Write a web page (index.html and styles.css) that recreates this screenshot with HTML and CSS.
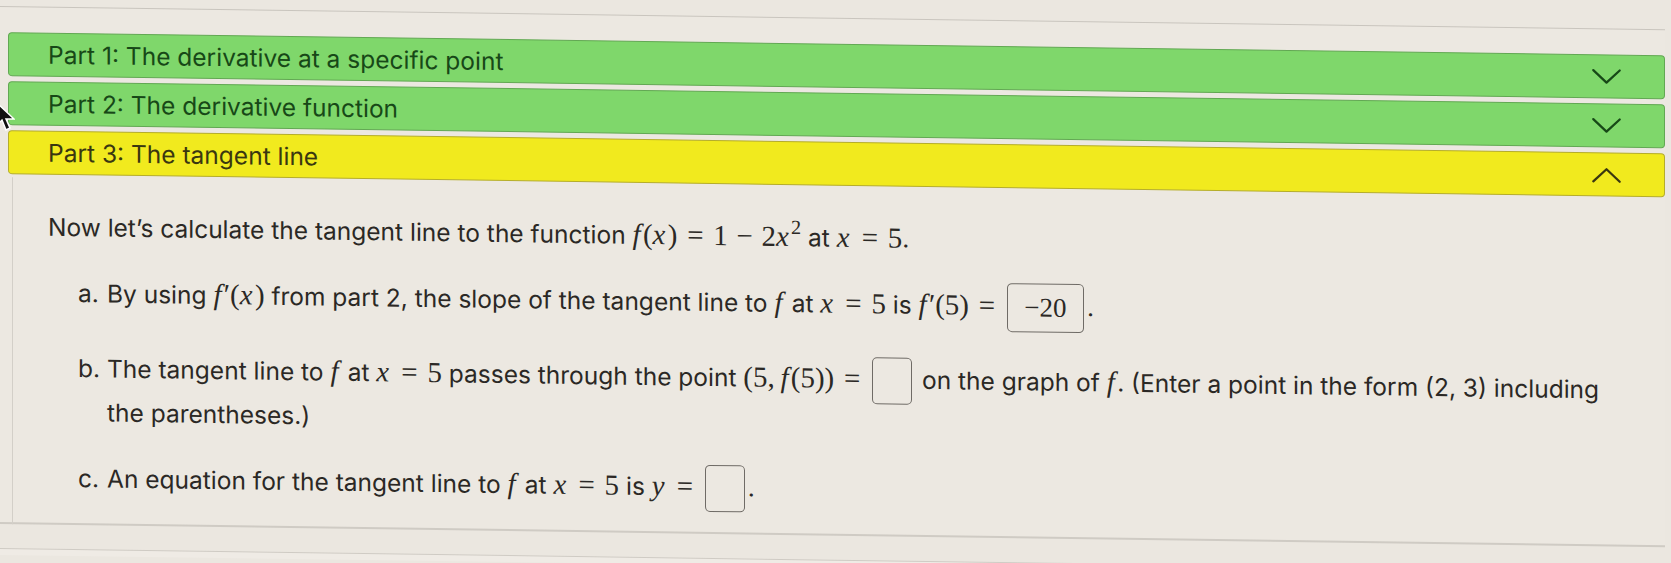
FILE: index.html
```html
<!DOCTYPE html>
<html lang="en">
<head>
<meta charset="utf-8">
<title>Part 3: The tangent line</title>
<link rel="stylesheet" href="styles.css">
</head>
<body>
<div class="page">
  <div class="sheet">
    <div class="parts">
      <div class="part done">
        <span class="part-title">Part 1: The derivative at a specific point</span>
        <svg class="chev" viewBox="0 0 32 18"><polyline points="2,2 16,15 30,2"/></svg>
      </div>
      <div class="part done">
        <span class="part-title">Part 2: The derivative function</span>
        <svg class="chev" viewBox="0 0 32 18"><polyline points="2,2 16,15 30,2"/></svg>
      </div>
      <div class="part current">
        <span class="part-title">Part 3: The tangent line</span>
        <svg class="chev" viewBox="0 0 32 18"><polyline points="2,16 16,3 30,16"/></svg>
      </div>
    </div>

    <div class="content">
      <p class="intro">Now let’s calculate the tangent line to the function <span class="math"><i>f</i>(<i>x</i>)<span class="rel">=</span>1<span class="bin">−</span>2<i>x</i><sup>2</sup></span> at <span class="math"><i>x</i><span class="rel">=</span>5</span>.</p>

      <div class="step step-a">
        <span class="mark">a.</span>
        <div class="body">By using <span class="math"><i>f</i>′(<i>x</i>)</span> from part 2, the slope of the tangent line to <span class="math"><i>f</i></span> at <span class="math"><i>x</i><span class="rel">=</span>5</span> is <span class="math"><i>f</i>′(5)<span class="rel">=</span></span><span class="answer filled"><span class="math">−20</span></span>.</div>
      </div>

      <div class="step step-b">
        <span class="mark">b.</span>
        <div class="body">The tangent line to <span class="math"><i>f</i></span> at <span class="math"><i>x</i><span class="rel">=</span>5</span> passes through the point <span class="math">(5,<span class="thin"></span><i>f</i>(5))<span class="rel">=</span></span><span class="answer"></span> on the graph of <span class="math"><i>f</i></span>. (Enter a point in the form (2, 3) including the parentheses.)</div>
      </div>

      <div class="step step-c">
        <span class="mark">c.</span>
        <div class="body">An equation for the tangent line to <span class="math"><i>f</i></span> at <span class="math"><i>x</i><span class="rel">=</span>5</span> is <span class="math"><i>y</i><span class="rel">=</span></span><span class="answer"></span>.</div>
      </div>
    </div>
  </div>
  <div class="footer"></div>
</div>

<svg class="cursor" viewBox="0 0 20 32"><polygon points="1,1 1,25 7,19 11,29 15,27 11,18 19,18"/></svg>
</body>
</html>
```

FILE: styles.css
```css
html, body {
  margin: 0;
  padding: 0;
}

body {
  background: #ebe7e0;
  font-family: Inter, Roboto, "Liberation Sans", sans-serif;
  color: #2b2825;
  width: 1671px;
  height: 563px;
  overflow: hidden;
  position: relative;
}

.page {
  transform: skewY(0.8deg);
  transform-origin: 0 0;
  padding-top: 6px;
}

.sheet {
  border-top: 1px solid #c9c5be;
  border-bottom: 2px solid #cfcbc4;
  background: #ece8e1;
  margin-right: 6px;
  padding-top: 25px;
  padding-bottom: 23px;
  position: relative;
}

.sheet::before {
  content: "";
  position: absolute;
  left: 12px;
  top: 170px;
  bottom: -2px;
  border-left: 1px solid #d3cfc8;
}

.parts {
  display: flex;
  flex-direction: column;
  gap: 5px;
  margin-left: 8px;
}

.part {
  height: 42px;
  border-radius: 4px;
  display: flex;
  align-items: center;
  justify-content: space-between;
  padding: 0 42px 0 39px;
  font-size: 24.5px;
}

.part.done {
  background: #7fd76b;
  border: 1px solid #62a853;
  color: #174817;
}

.part.current {
  background: #f1ea1e;
  border: 1px solid #b5ad2a;
  color: #3a3710;
}

.chev {
  width: 31px;
  height: 17px;
}

.chev polyline {
  fill: none;
  stroke: currentColor;
  stroke-width: 2.4;
  stroke-linecap: round;
  stroke-linejoin: round;
}

.content {
  padding: 30px 30px 0 48px;
  font-size: 24.5px;
  line-height: 44px;
  color: #2b2825;
}

.intro {
  margin: 0 0 22px 0;
}

.step {
  display: flex;
  margin: 0 0 0 30px;
}

.step-a {
  margin-bottom: 31px;
}

.step-b {
  margin-bottom: 22px;
}

.mark {
  width: 29px;
  flex: none;
}

.body {
  flex: 1;
  max-width: 1520px;
}

.math {
  font-family: "Liberation Serif", "DejaVu Serif", serif;
  font-size: 1.18em;
  line-height: 1;
  white-space: nowrap;
}

.math i {
  font-style: italic;
  padding-right: 0.08em;
}

.math sup {
  font-size: 0.7em;
  vertical-align: 0.6em;
  line-height: 0;
}

.rel {
  margin: 0 0.34em;
}

.bin {
  margin: 0 0.3em;
}

.thin {
  display: inline-block;
  width: 0.2em;
}

.answer {
  display: inline-block;
  vertical-align: middle;
  width: 40px;
  height: 47px;
  margin: -10px 3px -8px 2px;
  border: 1px solid #6f6b66;
  border-radius: 5px;
  box-sizing: border-box;
  text-align: center;
  line-height: 45px;
}

.answer.filled {
  width: 77px;
  height: 49px;
  line-height: 47px;
}

.answer .math {
  font-size: 27px;
}

.footer {
  margin-top: 24px;
  border-top: 1px solid #cfcbc4;
  height: 6px;
  background: #efebe5;
}

.cursor {
  position: absolute;
  left: -5px;
  top: 101px;
  width: 20px;
  height: 32px;
}

.cursor polygon {
  fill: #111;
  stroke: #fff;
  stroke-width: 1.5;
}
```
